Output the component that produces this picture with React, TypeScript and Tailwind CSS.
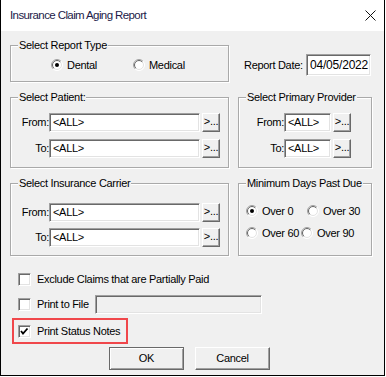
const sunken =
  "border border-t-[#a0a0a0] border-l-[#a0a0a0] border-b-white border-r-white shadow-[inset_1px_1px_0_#696969,inset_-1px_-1px_0_#e3e3e3]"
const raised =
  "border border-t-white border-l-white border-b-[#696969] border-r-[#696969] shadow-[inset_-1px_-1px_0_#a0a0a0] bg-[#f0f0f0]"

function Radio({ checked = false }: { checked?: boolean }) {
  return (
    <svg width="12" height="12" viewBox="0 0 12 12" className="shrink-0">
      <circle cx="6" cy="6" r="5.5" fill="#fff" stroke="#fff" />
      <path d="M2.1 9.9 A5.5 5.5 0 0 1 9.9 2.1" fill="none" stroke="#a0a0a0" />
      <circle cx="6" cy="6" r="4.5" fill="#fff" stroke="#e3e3e3" />
      <path d="M2.8 9.2 A4.5 4.5 0 0 1 9.2 2.8" fill="none" stroke="#696969" />
      {checked && <circle cx="6" cy="6" r="2" fill="#000" />}
    </svg>
  )
}

function Check({ checked = false }: { checked?: boolean }) {
  return (
    <div className={`w-[13px] h-[13px] shrink-0 bg-white ${sunken}`}>
      {checked && (
        <svg width="11" height="11" viewBox="0 0 11 11">
          <polyline points="2,5 4,7.5 8.5,2.5" fill="none" stroke="#000" strokeWidth="1.8" />
        </svg>
      )}
    </div>
  )
}

function Group({ title, className, children }: { title: string; className: string; children: React.ReactNode }) {
  return (
    <div className={`relative border border-[#a9a9a9] shadow-[inset_1px_1px_0_#fff,1px_1px_0_#fff] ${className}`}>
      <span className="absolute left-[7px] -top-[8px] bg-[#f0f0f0] px-[1px] leading-[14px] whitespace-nowrap">{title}</span>
      {children}
    </div>
  )
}

function PickRow({ label, labelW, inputW, className = "" }: { label: string; labelW: string; inputW: string; className?: string }) {
  return (
    <div className={`flex items-center ${className}`}>
      <span className={`${labelW} text-right whitespace-nowrap`}>{label}</span>
      <div className={`${inputW} h-[19px] bg-white pl-[3px] flex items-center ${sunken}`}>&lt;ALL&gt;</div>
      <button className={`ml-[2px] w-[18px] h-[19px] text-[11px] leading-none pb-[2px] tracking-[-0.3px] ${raised}`}>&gt;...</button>
    </div>
  )
}

function RadioItem({ label, checked, className = "" }: { label: string; checked?: boolean; className?: string }) {
  return (
    <div className={`flex items-center gap-[4px] h-[14px] whitespace-nowrap ${className}`}>
      <Radio checked={checked} />
      <span>{label}</span>
    </div>
  )
}

export default function App() {
  return (
    <div className="w-[386px] h-[377px] bg-white font-['Liberation_Sans',Arial,sans-serif] text-[11px] tracking-[-0.3px] text-black">
      <div className="w-[385px] h-[376px] flex flex-col border-x border-b border-black">
        {/* Title bar */}
        <div className="h-[31px] shrink-0 bg-white flex items-center justify-between pl-[9px] pr-[8px]">
          <span className="text-[11.5px] tracking-[-0.6px] text-[#221a48]">Insurance Claim Aging Report</span>
          <svg width="11" height="11" viewBox="0 0 11 11">
            <path d="M0.5 0.5 L10.5 10.5 M10.5 0.5 L0.5 10.5" stroke="#111" strokeWidth="1" />
          </svg>
        </div>

        <div className="flex-1 bg-[#f0f0f0] pl-[9px] pt-[14px]">
          {/* Report type + date */}
          <div className="flex items-start">
            <Group title="Select Report Type" className="w-[219px] h-[37px]">
              <div className="flex items-center pl-[40px] pt-[12px]">
                <RadioItem label="Dental" checked className="w-[82px]" />
                <RadioItem label="Medical" />
              </div>
            </Group>
            <div className="flex items-center ml-[15px] mt-[9px] whitespace-nowrap">
              <span className="w-[62px]">Report Date:</span>
              <div className={`w-[65px] h-[22px] bg-white pl-[3px] flex items-center text-[12px] tracking-[-0.2px] ${sunken}`}>04/05/2022</div>
            </div>
          </div>

          {/* Patient + provider */}
          <div className="flex items-start mt-[15px]">
            <Group title="Select Patient:" className="w-[219px] h-[71px]">
              <div className="pt-[15px]">
                <PickRow label="From:" labelW="w-[38px]" inputW="w-[151px]" />
                <PickRow label="To:" labelW="w-[38px]" inputW="w-[151px]" className="mt-[7px]" />
              </div>
            </Group>
            <Group title="Select Primary Provider" className="ml-[9px] w-[134px] h-[71px]">
              <div className="pt-[15px]">
                <PickRow label="From:" labelW="w-[45px]" inputW="w-[47px]" />
                <PickRow label="To:" labelW="w-[45px]" inputW="w-[47px]" className="mt-[7px]" />
              </div>
            </Group>
          </div>

          {/* Carrier + days */}
          <div className="flex items-start mt-[15px]">
            <Group title="Select Insurance Carrier" className="w-[219px] h-[73px]">
              <div className="pt-[19px]">
                <PickRow label="From:" labelW="w-[38px]" inputW="w-[151px]" />
                <PickRow label="To:" labelW="w-[38px]" inputW="w-[151px]" className="mt-[6px]" />
              </div>
            </Group>
            <Group title="Minimum Days Past Due" className="ml-[9px] w-[134px] h-[73px]">
              <div className="pt-[20px] pl-[7px]">
                <div className="flex">
                  <RadioItem label="Over 0" checked className="w-[61px]" />
                  <RadioItem label="Over 30" />
                </div>
                <div className="flex mt-[8px]">
                  <RadioItem label="Over 60" className="w-[55px]" />
                  <RadioItem label="Over 90" />
                </div>
              </div>
            </Group>
          </div>

          {/* Options */}
          <div className="flex items-center gap-[6px] ml-[8px] mt-[17px] h-[13px] whitespace-nowrap">
            <Check />
            <span>Exclude Claims that are Partially Paid</span>
          </div>
          <div className="flex items-center ml-[8px] mt-[9px] h-[19px] whitespace-nowrap">
            <Check />
            <span className="ml-[6px] w-[58px]">Print to File</span>
            <div className={`w-[167px] h-[19px] bg-[#f0f0f0] ${sunken}`} />
          </div>
          <div className="flex items-center gap-[6px] ml-[2px] mt-[4px] w-[116px] h-[26px] border-2 border-[#f0474b] pl-[4px] whitespace-nowrap">
            <Check checked />
            <span>Print Status Notes</span>
          </div>

          {/* Buttons */}
          <div className="flex mt-[3px] ml-[99px] gap-[11px]">
            <button className="w-[75px] h-[23px] border border-[#696969] bg-[#f0f0f0] shadow-[inset_1px_1px_0_#fff,inset_-1px_-1px_0_#a0a0a0] text-[11px]">
              OK
            </button>
            <button className={`w-[75px] h-[23px] text-[11px] ${raised}`}>Cancel</button>
          </div>
        </div>
      </div>
    </div>
  )
}
